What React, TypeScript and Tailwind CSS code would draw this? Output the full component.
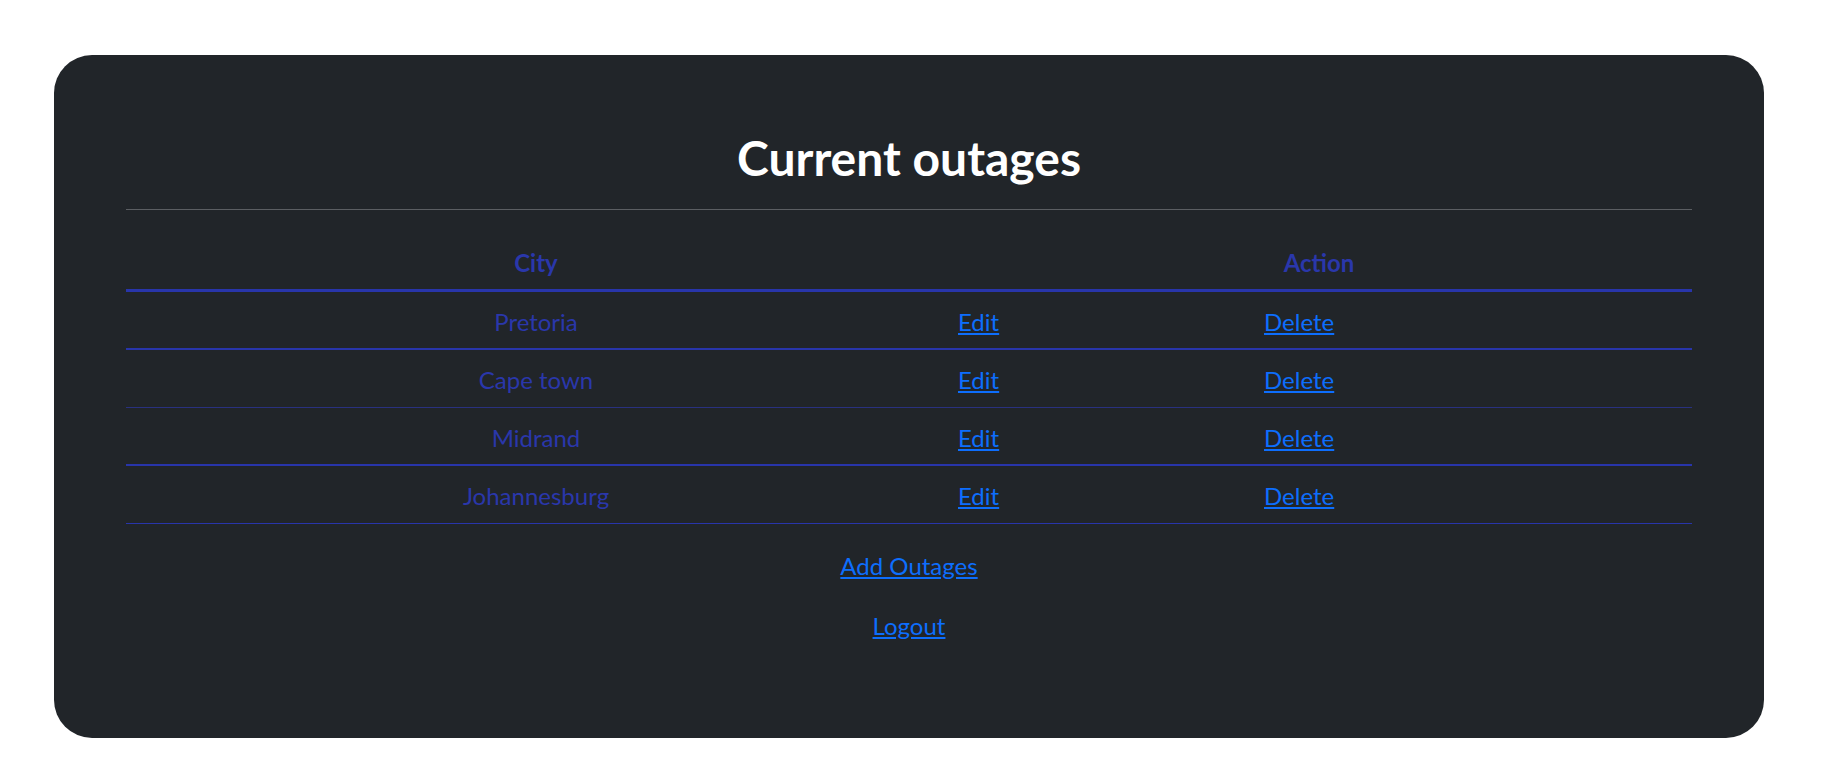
const ROWS: { city: string; border: string }[] = [
  { city: "Pretoria", border: "border-b-2 border-[#2835aa]" },
  { city: "Cape town", border: "border-b border-[#29317f]" },
  { city: "Midrand", border: "border-b-2 border-[#2835aa]" },
  { city: "Johannesburg", border: "border-b border-[#2835aa]" },
];

export default function App() {
  return (
    <div className="min-h-screen bg-white pt-[55px] pl-[54px] font-['Lato','Liberation_Sans',sans-serif]">
      <div className="w-[1710px] h-[683px] rounded-[38px] bg-[#212529] px-[72px]">
        <h1 className="pt-[74px] pb-[22px] text-center text-[48px] leading-[58px] font-bold text-white">
          Current outages
        </h1>
        <div className="h-px bg-[#5b5e62]" />

        {/* table */}
        <div className="text-[24px] leading-[29px] text-[#2a37ab]">
          <div className="flex border-b-[3px] border-[#2835aa] pt-[38px] pb-[12px] font-bold">
            <div className="w-[820px] text-center">City</div>
            <div className="flex-1 text-center">Action</div>
          </div>
          {ROWS.map((r) => (
            <div key={r.city} className={`flex h-[58px] pt-[15px] ${r.border}`}>
              <div className="w-[820px] text-center">{r.city}</div>
              <div className="w-[306px] pl-[12px]">
                <a href="#" className="text-[#0d6efd] underline">Edit</a>
              </div>
              <div className="flex-1 pl-[12px]">
                <a href="#" className="text-[#0d6efd] underline">Delete</a>
              </div>
            </div>
          ))}
        </div>

        <div className="flex flex-col items-center text-[24px] leading-[29px]">
          <a href="#" className="mt-[27px] text-[#0d6efd] underline">Add Outages</a>
          <a href="#" className="mt-[31px] text-[#0d6efd] underline">Logout</a>
        </div>
      </div>
    </div>
  );
}
